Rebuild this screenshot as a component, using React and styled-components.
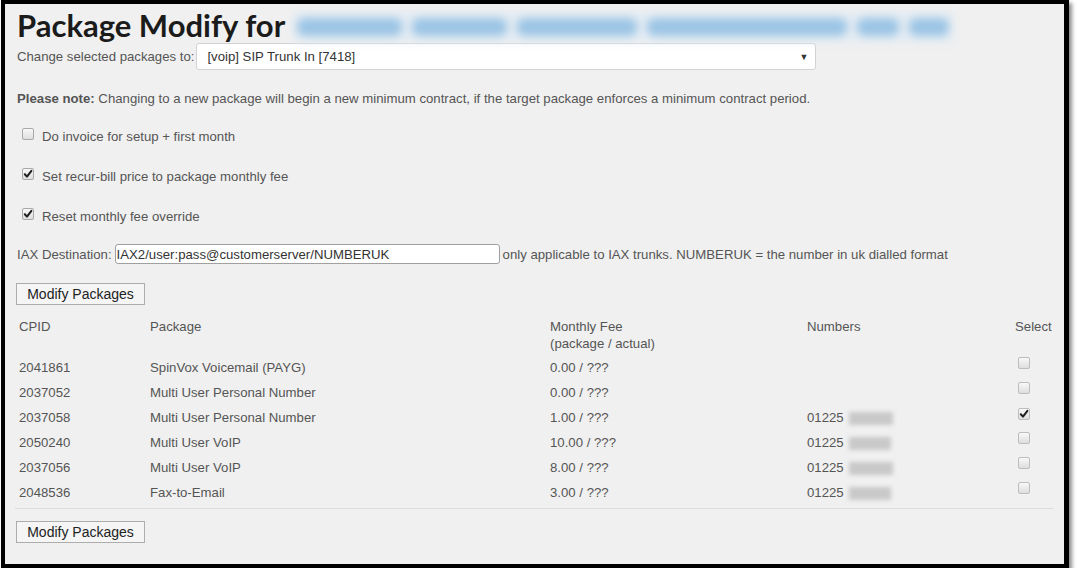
import React from "react";
import styled, { createGlobalStyle } from "styled-components";

const Global = createGlobalStyle`
  html, body { margin: 0; padding: 0; background: #ffffff; }
  body { font-family: "Liberation Sans", Arial, sans-serif; font-size: 13.2px; color: #555; }
`;

const Frame = styled.div`
  box-sizing: border-box;
  width: 1068px;
  height: 568px;
  margin: 0 0 0 1px;
  border: 4px solid #000;
  border-right-width: 5px;
  background: #f0f0f0;
  padding: 0 12px 0 12px;
  box-shadow: 3px 3px 4px rgba(0, 0, 0, 0.45);
  overflow: hidden;
`;

const TitleRow = styled.div`
  display: flex;
  align-items: flex-start;
  height: 39px;
`;

const Title = styled.h1`
  margin: 0;
  padding-top: 3px;
  font-family: Lato, "Open Sans", sans-serif;
  font-weight: 700;
  font-size: 31px;
  line-height: 36px;
  color: #1b1b1b;
  white-space: nowrap;
`;

const Redacted = styled.div`
  display: flex;
  gap: 10px;
  margin-left: 8px;
  margin-top: 8px;
  height: 30px;
  padding: 0 4px;
  background: #e2ebf3;
  filter: blur(4px);
`;

const RedactedWord = styled.span`
  display: block;
  margin-top: 6px;
  height: 18px;
  width: ${(p) => p.w}px;
  background: #9cc5e5;
  border-radius: 8px;
`;

const SelectRow = styled.div`
  display: flex;
  align-items: center;
  gap: 2px;
  height: 27px;
`;

const FakeSelect = styled.div`
  box-sizing: border-box;
  width: 620px;
  height: 27px;
  display: flex;
  align-items: center;
  justify-content: space-between;
  padding: 0 7px 0 10px;
  background: #fff;
  border: 1px solid #d2d2d2;
  border-radius: 3px;
  color: #333;
`;

const Arrow = styled.span`
  font-size: 9px;
  color: #333;
`;

const Note = styled.p`
  margin: 20px 0 0;
  line-height: 17px;
  b { color: #555; }
`;

const CheckRow = styled.label`
  display: flex;
  align-items: center;
  gap: 8px;
  margin-top: ${(p) => p.mt}px;
  line-height: 17px;
  padding-left: 5px;
`;

const Box = styled.span`
  box-sizing: border-box;
  display: inline-flex;
  align-items: center;
  justify-content: center;
  width: 12px;
  height: 12px;
  border: 1px solid ${(p) => (p.faint ? "#bdbdbd" : "#a9a9a9")};
  border-radius: 2px;
  background: linear-gradient(#f8f8f8, #dedede);
  position: relative;
  top: -3px;
  margin-left: ${(p) => p.ml || 0}px;
`;

const Check = ({ checked, faint, ml }) => (
  <Box faint={faint} ml={ml}>
    {checked && (
      <svg width="10" height="10" viewBox="0 0 10 10">
        <path d="M1.8 5.2 L4 7.6 L8.4 1.8" fill="none" stroke="#1e1e1e" strokeWidth="2" strokeLinecap="round" strokeLinejoin="round" />
      </svg>
    )}
  </Box>
);

const IaxRow = styled.div`
  display: flex;
  align-items: center;
  gap: 3px;
  margin-top: 19px;
  height: 20px;
`;

const TextInput = styled.div`
  box-sizing: border-box;
  width: 385px;
  height: 20px;
  display: flex;
  align-items: center;
  padding-left: 1px;
  background: #fff;
  border: 1px solid #a0a0a0;
  border-radius: 3px;
  color: #333;
`;

const Button = styled.button`
  box-sizing: border-box;
  display: block;
  width: 129px;
  height: 22px;
  margin: ${(p) => p.mt}px 0 0 -1px;
  padding: 0;
  font-family: "Liberation Sans", Arial, sans-serif;
  font-size: 14px;
  color: #222;
  background: #f5f5f5;
  border: 1px solid #adadad;
  border-radius: 0;
`;

const TableWrap = styled.div`
  margin: 13px 0 0 -2px;
  width: 1038px;
  padding-bottom: 3px;
  border-bottom: 1px solid #dcdcdc;
`;

const Table = styled.table`
  width: 100%;
  border-collapse: collapse;
  table-layout: fixed;
  color: #555;
`;

const Th = styled.th`
  box-sizing: border-box;
  text-align: left;
  font-weight: normal;
  vertical-align: top;
  padding: 0 4px 3px;
  line-height: 17px;
  width: ${(p) => (p.w ? `${p.w}px` : "auto")};
`;

const Td = styled.td`
  height: 25px;
  padding: 0 4px;
  line-height: 17px;
  vertical-align: middle;
  white-space: nowrap;
`;

const Blurred = styled.span`
  display: inline-block;
  vertical-align: middle;
  width: ${(p) => p.w}px;
  height: 13px;
  margin-left: 5px;
  background: #c9c9c9;
  filter: blur(2px);
`;

const rows = [
  { id: "2041861", pkg: "SpinVox Voicemail (PAYG)", fee: "0.00 / ???", num: false, sel: false },
  { id: "2037052", pkg: "Multi User Personal Number", fee: "0.00 / ???", num: false, sel: false },
  { id: "2037058", pkg: "Multi User Personal Number", fee: "1.00 / ???", num: 44, sel: true },
  { id: "2050240", pkg: "Multi User VoIP", fee: "10.00 / ???", num: 42, sel: false },
  { id: "2037056", pkg: "Multi User VoIP", fee: "8.00 / ???", num: 44, sel: false },
  { id: "2048536", pkg: "Fax-to-Email", fee: "3.00 / ???", num: 42, sel: false },
];

export default function App() {
  return (
    <>
      <Global />
      <Frame>
        <TitleRow>
          <Title>Package Modify for</Title>
          <Redacted>
            <RedactedWord w={105} />
            <RedactedWord w={95} />
            <RedactedWord w={120} />
            <RedactedWord w={200} />
            <RedactedWord w={42} />
            <RedactedWord w={40} />
          </Redacted>
        </TitleRow>
        <SelectRow>
          <span>Change selected packages to:</span>
          <FakeSelect>
            <span>[voip] SIP Trunk In [7418]</span>
            <Arrow>▼</Arrow>
          </FakeSelect>
        </SelectRow>
        <Note>
          <b>Please note:</b> Changing to a new package will begin a new minimum contract, if the target package enforces a minimum contract period.
        </Note>
        <CheckRow mt={21}>
          <Check />
          <span>Do invoice for setup + first month</span>
        </CheckRow>
        <CheckRow mt={23}>
          <Check checked />
          <span>Set recur-bill price to package monthly fee</span>
        </CheckRow>
        <CheckRow mt={23}>
          <Check checked />
          <span>Reset monthly fee override</span>
        </CheckRow>
        <IaxRow>
          <span>IAX Destination:</span>
          <TextInput>IAX2/user:pass@customerserver/NUMBERUK</TextInput>
          <span>only applicable to IAX trunks. NUMBERUK = the number in uk dialled format</span>
        </IaxRow>
        <Button mt={19}>Modify Packages</Button>
        <TableWrap>
          <Table>
            <thead>
              <tr>
                <Th w={131}>CPID</Th>
                <Th w={400}>Package</Th>
                <Th w={257}>Monthly Fee<br />(package / actual)</Th>
                <Th w={208}>Numbers</Th>
                <Th>Select</Th>
              </tr>
            </thead>
            <tbody>
              {rows.map((r) => (
                <tr key={r.id}>
                  <Td>{r.id}</Td>
                  <Td>{r.pkg}</Td>
                  <Td>{r.fee}</Td>
                  <Td>{r.num ? <>01225<Blurred w={r.num} /></> : null}</Td>
                  <Td><Check checked={r.sel} faint ml={3} /></Td>
                </tr>
              ))}
            </tbody>
          </Table>
        </TableWrap>
        <Button mt={12}>Modify Packages</Button>
      </Frame>
    </>
  );
}
